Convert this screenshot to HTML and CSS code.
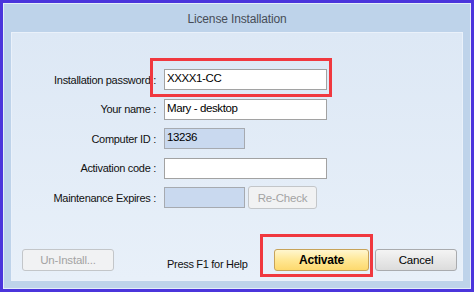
FILE: index.html
```html
<!DOCTYPE html>
<html>
<head>
<meta charset="utf-8">
<link rel="stylesheet" href="styles.css">
</head>
<body>
<div class="window">
  <div class="frame">
    <div class="title">License Installation</div>
    <div class="client">
      <div class="form">
        <div class="row"><span class="label">Installation password :</span><span class="field wide">XXXX1-CC</span></div>
        <div class="row"><span class="label">Your name :</span><span class="field wide">Mary - desktop</span></div>
        <div class="row"><span class="label">Computer ID :</span><span class="field short disabled">13236</span></div>
        <div class="row"><span class="label">Activation code :</span><span class="field wide"></span></div>
        <div class="row"><span class="label">Maintenance Expires :</span><span class="field short disabled"></span><span class="btn btn-disabled recheck">Re-Check</span></div>
      </div>
      <div class="bottom">
        <span class="btn btn-disabled uninstall">Un-Install...</span>
        <span class="help">Press F1 for Help</span>
        <span class="btn btn-primary activate">Activate</span>
        <span class="btn btn-normal cancel">Cancel</span>
      </div>
    </div>
  </div>
  <div class="mark mark-password"></div>
  <div class="mark mark-activate"></div>
</div>
</body>
</html>
```
FILE: styles.css
```css
html, body {
  margin: 0;
  padding: 0;
}
body {
  width: 474px;
  height: 292px;
  overflow: hidden;
  font-family: "Liberation Sans", Arial, sans-serif;
  font-size: 11px;
  color: #000;
}
.window {
  position: relative;
  box-sizing: border-box;
  width: 474px;
  height: 292px;
  border: 3px solid #4b35dc;
}
.frame {
  box-sizing: border-box;
  height: 100%;
  border: 1px solid #e4eef9;
  background: #bed3ea;
  padding: 0 7px 7px 7px;
  display: flex;
  flex-direction: column;
}
.title {
  height: 28px;
  line-height: 30px;
  text-align: center;
  font-size: 12px;
  letter-spacing: -0.15px;
  color: #474d57;
}
.client {
  flex: 1;
  box-sizing: border-box;
  border: 1px solid #eaf1fa;
  background: linear-gradient(#dde8f5, #e8f0f9);
  padding: 36px 5px 9px 10px;
  display: flex;
  flex-direction: column;
}
.form {
  display: flex;
  flex-direction: column;
  gap: 8.5px;
}
.row {
  display: flex;
  align-items: center;
  height: 21px;
}
.label {
  width: 134px;
  text-align: right;
  letter-spacing: -0.3px;
  margin-right: 8px;
  color: #111;
}
.field {
  box-sizing: border-box;
  height: 21px;
  border: 1px solid #a2a2a2;
  background: #fff;
  padding: 0 2px;
  line-height: 17px;
  font-size: 11.5px;
  letter-spacing: -0.4px;
}
.wide { width: 163px; }
.short { width: 81px; }
.disabled {
  background: #c9d9ef;
  border-color: #a6aab0;
}
.btn {
  box-sizing: border-box;
  display: flex;
  align-items: center;
  justify-content: center;
  height: 22px;
  border-radius: 3px;
  letter-spacing: -0.2px;
  font-size: 11.5px;
}
.btn-disabled {
  border: 1px solid #c3c6c9;
  background: #f1f2f3;
  color: #a3a3a3;
}
.recheck {
  width: 69px;
  height: 23px;
  margin-left: 3px;
}
.bottom {
  margin-top: auto;
  display: flex;
  align-items: center;
}
.uninstall {
  width: 92px;
}
.help {
  margin-left: 53px;
  margin-top: 7px;
  font-size: 11px;
  letter-spacing: -0.3px;
  color: #111;
}
.btn-primary {
  border: 1px solid #c7a35a;
  background: linear-gradient(#fff6cf, #ffe794 50%, #fdd96e);
  font-weight: bold;
  font-size: 12px;
}
.activate {
  width: 95px;
  margin-left: auto;
}
.btn-normal {
  border: 1px solid #a9abae;
  background: linear-gradient(#f4f4f4, #e8e8e8 50%, #dcdcdc);
}
.cancel {
  width: 82px;
  margin-left: 6px;
}
.mark {
  position: absolute;
  box-sizing: border-box;
  border: 3px solid #f0383f;
}
.mark-password {
  left: 147px;
  top: 55px;
  width: 182px;
  height: 39px;
}
.mark-activate {
  left: 257px;
  top: 231px;
  width: 113px;
  height: 43px;
}
```
